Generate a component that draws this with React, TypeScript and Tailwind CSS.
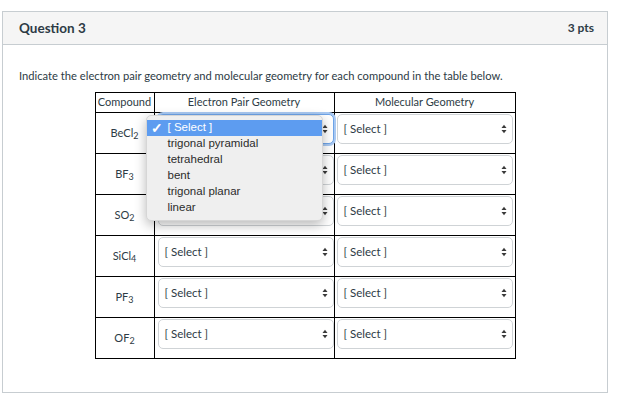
const rows: { name: string; sub: string }[] = [
  { name: "BeCl", sub: "2" },
  { name: "BF", sub: "3" },
  { name: "SO", sub: "2" },
  { name: "SiCl", sub: "4" },
  { name: "PF", sub: "3" },
  { name: "OF", sub: "2" },
];

const options = ["trigonal pyramidal", "tetrahedral", "bent", "trigonal planar", "linear"];

function Arrows() {
  return (
    <svg width="6" height="10" viewBox="0 0 6 10" className="shrink-0">
      <path d="M0.5 4 L3 0.8 L5.5 4 Z" fill="#3a3a3a" />
      <path d="M0.5 6 L5.5 6 L3 9.2 Z" fill="#3a3a3a" />
    </svg>
  );
}

function SelectBox({ focused = false }: { focused?: boolean }) {
  return (
    <div
      className={`flex h-[30px] w-[176px] items-center justify-between rounded-[5px] border bg-white pl-[6px] pr-[5px] text-[11.5px] text-[#2d3b45] ${
        focused ? "border-[#6ea4e8] ring-2 ring-[#a9c9f2]" : "border-[#cfd3d6]"
      }`}
    >
      <span>[ Select ]</span>
      <Arrows />
    </div>
  );
}

// native-looking open menu over the first select
function Dropdown() {
  return (
    <div className="absolute left-[-9px] top-[2px] z-10 w-[177px] rounded-[5px] border border-[#d6d6d6] bg-[#efefef] py-[4px] font-['Liberation_Sans',Arial,sans-serif] text-[11.5px] text-[#2b2b2b] shadow-[0_4px_12px_rgba(0,0,0,0.28)]">
      <div className="flex h-[16px] items-center bg-[#5d9cf0] text-white">
        <span className="w-[21px] pl-[4px] text-[14px] font-bold leading-none">✓</span>
        <span>[ Select ]</span>
      </div>
      {options.map((o) => (
        <div key={o} className="flex h-[16px] items-center pl-[21px]">
          {o}
        </div>
      ))}
    </div>
  );
}

export default function App() {
  return (
    <div className="h-[397px] w-[623px] bg-white pt-[11px] pl-[2px] font-['Lato',sans-serif] text-[#2d3b45]">
      <div className="h-[382px] w-[606px] border border-[#c7cdd1]">
        <div className="flex h-[33px] items-center justify-between border-b border-[#c7cdd1] bg-[#f5f5f5] pl-[16px] pr-[13px]">
          <h2 className="text-[13.5px] font-bold">Question 3</h2>
          <span className="text-[12px] font-bold">3 pts</span>
        </div>
        <p className="pl-[16px] pt-[24px] text-[11.2px] leading-[14px]">
          Indicate the electron pair geometry and molecular geometry for each compound in the table below.
        </p>
        <table className="mx-auto mt-[9px] w-[420px] table-fixed border-collapse text-[11px]">
          <colgroup>
            <col className="w-[59px]" />
            <col className="w-[180px]" />
            <col className="w-[181px]" />
          </colgroup>
          <thead>
            <tr className="h-[20px]">
              <th className="border border-black px-0 font-normal">Compound</th>
              <th className="border border-black font-normal">Electron Pair Geometry</th>
              <th className="border border-black font-normal">Molecular Geometry</th>
            </tr>
          </thead>
          <tbody>
            {rows.map((r, i) => (
              <tr key={r.name + r.sub} className="h-[41px]">
                <td className="border border-black text-center align-middle">
                  {r.name}
                  <sub className="text-[9px]">{r.sub}</sub>
                </td>
                <td className="relative border border-black pb-[9px] pl-[3px] pt-[1px] align-top">
                  <SelectBox focused={i === 0} />
                  {i === 0 && <Dropdown />}
                </td>
                <td className="border border-black pb-[9px] pl-[2px] pt-[1px] align-top">
                  <SelectBox />
                </td>
              </tr>
            ))}
          </tbody>
        </table>
      </div>
    </div>
  );
}
